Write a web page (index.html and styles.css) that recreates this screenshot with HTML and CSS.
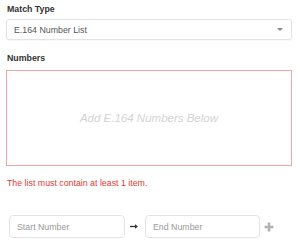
FILE: index.html
```html
<!DOCTYPE html>
<html lang="en">
  <head>
    <meta charset="UTF-8" />
    <title>Match Type</title>
    <link rel="stylesheet" href="styles.css">
  </head>
  <body>
    <div class="field">
      <label class="fieldLabel">Match Type</label>
      <div class="select">
        <span>E.164 Number List</span>
        <span class="caret"></span>
      </div>
    </div>

    <div class="field">
      <label class="fieldLabel">Numbers</label>
      <div class="listBox">
        <span class="empty">Add E.164 Numbers Below</span>
      </div>
      <p class="error">The list must contain at least 1 item.</p>
    </div>

    <div class="rangeRow">
      <input class="numInput" type="text" placeholder="Start Number" />
      <svg class="arrow" width="8" height="7" viewBox="0 0 8 7">
        <path d="M0 3.5H6" stroke="#333" stroke-width="1.3" />
        <path d="M5 1.2L8 3.5L5 5.8Z" fill="#333" />
      </svg>
      <input class="numInput end" type="text" placeholder="End Number" />
      <svg class="plus" width="10" height="10" viewBox="0 0 10 10">
        <path d="M5 0.5V9.5M0.5 5H9.5" stroke="#b3b3b3" stroke-width="2.6" />
      </svg>
    </div>
  </body>
</html>
```

FILE: styles.css
```css
html {
  font-family: 'Liberation Sans', Arial, sans-serif;
  font-size: 8.8px;
}
body {
  margin: 0;
  padding: 4px 8px 0 6px;
  color: #555;
  background: #fff;
}
.fieldLabel {
  display: block;
  font-weight: bold;
  color: #333;
  line-height: 11px;
  margin-left: 1px;
}
.select {
  display: flex;
  align-items: center;
  justify-content: space-between;
  height: 21px;
  box-sizing: border-box;
  margin: 4px 0 13px;
  padding: 0 8px 0 7px;
  border: 1px solid #e3e3e3;
  border-radius: 3px;
  box-shadow: 0 1px 1px rgba(0, 0, 0, 0.04);
  color: #555;
}
.caret {
  width: 0;
  height: 0;
  border-left: 3px solid transparent;
  border-right: 3px solid transparent;
  border-top: 3px solid #888;
}
.listBox {
  display: flex;
  align-items: center;
  justify-content: center;
  height: 96px;
  box-sizing: border-box;
  margin-top: 6px;
  border: 1px solid #f3a5a5;
}
.empty {
  font-size: 11.5px;
  font-style: italic;
  color: #d3d3d3;
}
.error {
  margin: 12px 0 0 1px;
  color: #e53935;
  line-height: 11px;
}
.rangeRow {
  display: flex;
  align-items: center;
  margin: 26px 0 0 3px;
}
.numInput {
  width: 116px;
  height: 23px;
  box-sizing: border-box;
  padding: 0 7px;
  border: 1px solid #e3e3e3;
  border-radius: 4px;
  font-family: inherit;
  font-size: 8.8px;
  color: #555;
  outline: none;
}
.numInput.end {
  width: 115px;
}
.numInput::placeholder {
  color: #999;
}
.arrow {
  margin: 0 7px 0 5px;
}
.plus {
  margin-left: 4px;
}
```
